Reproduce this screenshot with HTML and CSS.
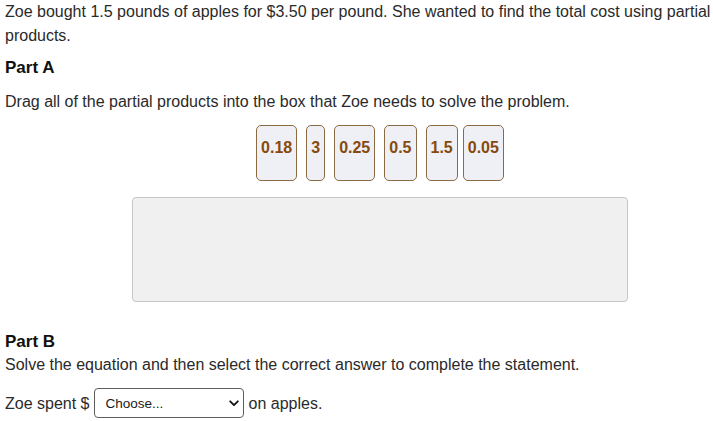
FILE: index.html
```html
<!DOCTYPE html>
<html lang="en">
<head>
<meta charset="utf-8">
<title>Partial products</title>
<link rel="stylesheet" href="styles.css">
</head>
<body>
<main class="question">
  <p class="stem">Zoe bought 1.5 pounds of apples for $3.50 per pound. She wanted to find the total cost using partial products.</p>

  <h2 class="part-title part-title--a">Part A</h2>
  <p class="prompt">Drag all of the partial products into the box that Zoe needs to solve the problem.</p>

  <div class="tiles">
    <div class="tile">0.18</div>
    <div class="tile">3</div>
    <div class="tile">0.25</div>
    <div class="tile">0.5</div>
    <div class="tile">1.5</div>
    <div class="tile tile--tight">0.05</div>
  </div>

  <div class="dropzone"></div>

  <h2 class="part-title part-title--b">Part B</h2>
  <p class="prompt prompt--b">Solve the equation and then select the correct answer to complete the statement.</p>

  <div class="answer-row">
    <span>Zoe spent $</span>
    <div class="select-wrap">
      <select class="choice">
        <option>Choose...</option>
        <option>5.25</option>
        <option>4.75</option>
      </select>
      <svg class="chevron" width="10" height="7" viewBox="0 0 10 7" aria-hidden="true">
        <path d="M1.2 1.3 L5 5.1 L8.8 1.3" fill="none" stroke="#111" stroke-width="1.8" stroke-linecap="round" stroke-linejoin="round"/>
      </svg>
    </div>
    <span>on apples.</span>
  </div>
</main>
</body>
</html>
```

FILE: styles.css
```css
html, body {
  margin: 0;
  padding: 0;
  background: #ffffff;
}

body {
  font-family: "Liberation Sans", Arial, sans-serif;
  font-size: 16px;
  line-height: 23px;
  color: #2a2a2a;
}

.question {
  padding: 0 0 0 5px;
}

.stem {
  margin: 0;
  line-height: 24px;
}

.part-title {
  margin: 0;
  font-size: 17px;
  font-weight: bold;
  color: #111111;
}

.part-title--a {
  margin-top: 9px;
  line-height: 22px;
}

.part-title--b {
  margin-top: 29px;
  line-height: 22px;
}

.prompt {
  margin: 11px 0 0;
}

.prompt--b {
  margin-top: 0;
}

.tiles {
  display: flex;
  justify-content: center;
  gap: 9px;
  margin: 12px 0 0 127px;
  width: 496px;
}

.tile {
  box-sizing: border-box;
  height: 56px;
  padding: 13px 4px 0;
  border: 1px solid #8c6a44;
  border-radius: 5px;
  background: #eef0f5;
  color: #864a0c;
  font-size: 16px;
  font-weight: bold;
  line-height: 18px;
}

.tile--tight {
  margin-left: -4px;
}

.dropzone {
  box-sizing: border-box;
  margin: 16px 0 0 127px;
  width: 496px;
  height: 105px;
  background: #f0f0f0;
  border: 1px solid #c6c6c6;
  border-radius: 4px;
}

.answer-row {
  display: flex;
  align-items: center;
  margin-top: 12px;
}

.select-wrap {
  position: relative;
  margin: 0 5px 0 4px;
}

.choice {
  appearance: none;
  -webkit-appearance: none;
  box-sizing: border-box;
  width: 150px;
  height: 30px;
  padding: 0 24px 0 11px;
  border: 1px solid #5e5e5e;
  border-radius: 4px;
  background: #ffffff;
  font-family: "Liberation Sans", Arial, sans-serif;
  font-size: 13.5px;
  color: #1a1a1a;
}

.chevron {
  position: absolute;
  right: 5px;
  top: 12px;
  pointer-events: none;
}
```
